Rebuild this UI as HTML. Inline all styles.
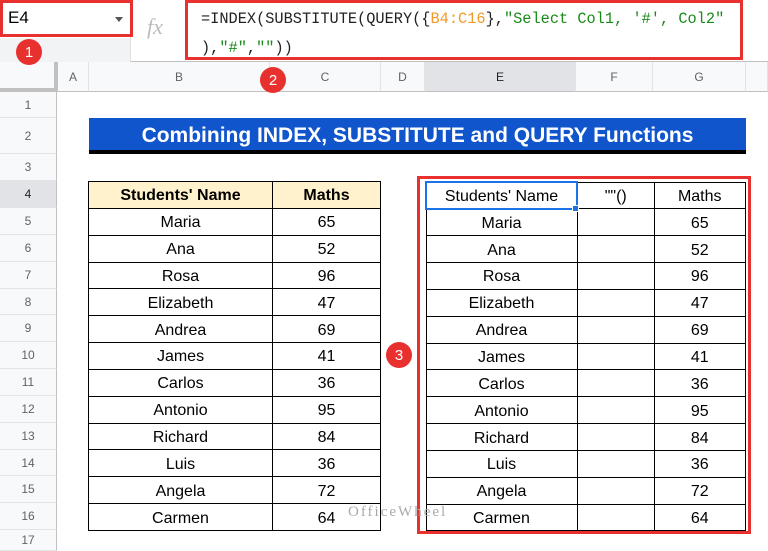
<!DOCTYPE html>
<html><head><style>
*{margin:0;padding:0;box-sizing:border-box}
body{width:768px;height:551px;overflow:hidden;background:#fff;font-family:"Liberation Sans",Arial,sans-serif;position:relative}
.a{position:absolute}
.rh{position:absolute;left:0;width:57px;background:#f8f9fa;border-right:1px solid #c0c0c0;border-bottom:1px solid #e2e3e3;color:#5f6368;font-size:12px;display:flex;align-items:center;justify-content:center}
.ch{position:absolute;top:62px;height:30px;background:#f8f9fa;border-right:1px solid #e2e3e3;border-bottom:1px solid #c0c0c0;color:#5f6368;font-size:12px;display:flex;align-items:center;justify-content:center}
table{position:absolute;border-collapse:collapse;font-size:16px;color:#000}
td{border:1px solid #000;text-align:center;height:26.85px;padding:3px 0 0 0;line-height:20px}
.badge{position:absolute;width:26px;height:26px;border-radius:50%;background:#e8312f;color:#fff;font-size:15px;display:flex;align-items:center;justify-content:center}
</style></head><body>
<div class="a" style="left:0;top:0;width:768px;height:62px;background:#fff;border-bottom:1px solid #c0c0c0"></div>
<div class="a" style="left:0;top:38px;width:130px;height:24px;background:#f1f3f4"></div>
<div class="a" style="left:130px;top:0;width:1px;height:62px;background:#e0e0e0"></div>
<div class="a" style="left:0;top:0;width:133px;height:37px;border:3px solid #e8312f;font-size:17px;padding:5px 0 0 5px">E4<span class="a" style="left:112px;top:14px;border:4px solid transparent;border-top:5px solid #555"></span></div>
<div class="a" style="left:147px;top:14px;font-family:'Liberation Serif',serif;font-style:italic;font-size:22px;color:#bbb">fx</div>
<div class="a" style="left:185px;top:0;width:558px;height:60px;border:3px solid #e8312f;font-family:'Liberation Mono',monospace;font-size:15.3px;line-height:29px;padding:2px 0 0 13px;color:#222">=INDEX(SUBSTITUTE(QUERY({<span style="color:#f09a2a">B4:C16</span>},<span style="color:#1a8a1a">"Select Col1, '#', Col2"</span><br>),<span style="color:#1a8a1a">"#"</span>,<span style="color:#1a8a1a">""</span>))</div>
<div class="ch" style="left:0;width:58px;border-right:4px solid #c0c0c0;border-bottom:4px solid #c0c0c0"></div>
<div class="ch" style="left:58px;width:31px">A</div>
<div class="ch" style="left:89px;width:181px">B</div>
<div class="ch" style="left:270px;width:111px">C</div>
<div class="ch" style="left:381px;width:44px">D</div>
<div class="ch" style="left:425px;width:151px;background:#e1e3e6;color:#222">E</div>
<div class="ch" style="left:576px;width:77px">F</div>
<div class="ch" style="left:653px;width:93px">G</div>
<div class="ch" style="left:746px;width:22px"></div>
<div class="rh" style="top:92px;height:26px">1</div>
<div class="rh" style="top:118px;height:36px">2</div>
<div class="rh" style="top:154px;height:27px">3</div>
<div class="rh" style="top:181px;height:27px;background:#e1e3e6;color:#222">4</div>
<div class="rh" style="top:208px;height:27px">5</div>
<div class="rh" style="top:235px;height:27px">6</div>
<div class="rh" style="top:262px;height:27px">7</div>
<div class="rh" style="top:289px;height:26px">8</div>
<div class="rh" style="top:315px;height:27px">9</div>
<div class="rh" style="top:342px;height:27px">10</div>
<div class="rh" style="top:369px;height:27px">11</div>
<div class="rh" style="top:396px;height:27px">12</div>
<div class="rh" style="top:423px;height:27px">13</div>
<div class="rh" style="top:450px;height:26px">14</div>
<div class="rh" style="top:476px;height:27px">15</div>
<div class="rh" style="top:503px;height:27px">16</div>
<div class="rh" style="top:530px;height:21px">17</div>
<div class="a" style="left:89px;top:118px;width:657px;height:36px;background:#1155cc;border-bottom:4px solid #000;color:#fff;font-weight:bold;font-size:21px;text-align:center;line-height:35px">Combining INDEX, SUBSTITUTE and QUERY Functions</div>
<table style="left:88px;top:181px;width:293px">
<tr style="background:#fff2cc;font-weight:bold"><td style="width:184px">Students' Name</td><td>Maths</td></tr>
<tr><td>Maria</td><td>65</td></tr><tr><td>Ana</td><td>52</td></tr><tr><td>Rosa</td><td>96</td></tr><tr><td>Elizabeth</td><td>47</td></tr><tr><td>Andrea</td><td>69</td></tr><tr><td>James</td><td>41</td></tr><tr><td>Carlos</td><td>36</td></tr><tr><td>Antonio</td><td>95</td></tr><tr><td>Richard</td><td>84</td></tr><tr><td>Luis</td><td>36</td></tr><tr><td>Angela</td><td>72</td></tr><tr><td>Carmen</td><td>64</td></tr>
</table>
<div class="a" style="left:417px;top:176px;width:334px;height:358px;border:3px solid #e8312f"></div>
<table style="left:425px;top:181px;width:321px">
<tr><td style="width:151px;border:2px solid #1a73e8">Students' Name</td><td style="width:77px">""()</td><td>Maths</td></tr>
<tr><td>Maria</td><td></td><td>65</td></tr><tr><td>Ana</td><td></td><td>52</td></tr><tr><td>Rosa</td><td></td><td>96</td></tr><tr><td>Elizabeth</td><td></td><td>47</td></tr><tr><td>Andrea</td><td></td><td>69</td></tr><tr><td>James</td><td></td><td>41</td></tr><tr><td>Carlos</td><td></td><td>36</td></tr><tr><td>Antonio</td><td></td><td>95</td></tr><tr><td>Richard</td><td></td><td>84</td></tr><tr><td>Luis</td><td></td><td>36</td></tr><tr><td>Angela</td><td></td><td>72</td></tr><tr><td>Carmen</td><td></td><td>64</td></tr>
</table>
<div class="a" style="left:572px;top:205px;width:7px;height:7px;background:#1a73e8;border:1px solid #fff"></div>
<div class="a" style="left:348px;top:504px;font-family:'Liberation Serif',serif;font-size:15px;letter-spacing:2px;color:#aaa">OfficeWheel</div>
<div class="badge" style="left:16px;top:39px">1</div>
<div class="badge" style="left:260px;top:67px">2</div>
<div class="badge" style="left:386px;top:342px">3</div>
</body></html>
